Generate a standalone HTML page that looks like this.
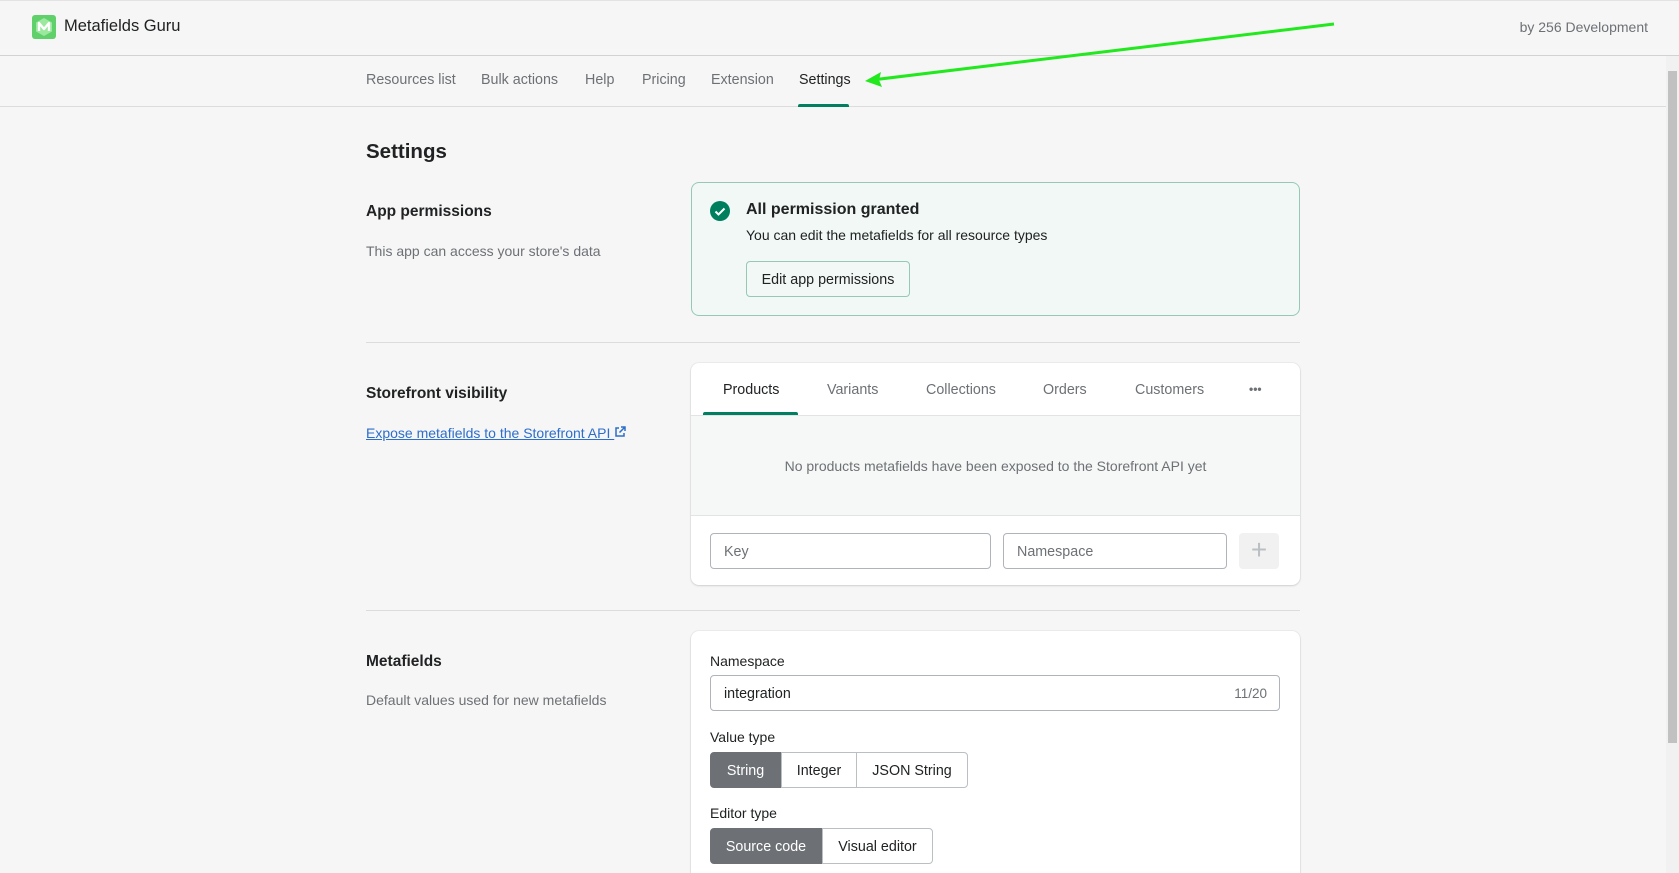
<!DOCTYPE html>
<html style="width:1679px;height:873px;overflow:hidden"><head><meta charset="utf-8"><style>
*{box-sizing:border-box;margin:0;padding:0}
body{width:1679px;height:873px;overflow:hidden;background:#f6f6f6;font-family:"Liberation Sans",sans-serif;color:#202223;position:relative;font-size:14px}
.a{position:absolute;white-space:nowrap}
.hdr{position:absolute;left:0;top:0;width:1679px;height:56px;border-top:1px solid #e3e3e3;border-bottom:1px solid #d2d2d2;background:#f6f6f6}
.nav{position:absolute;left:0;top:56px;width:1666px;height:51px;border-bottom:1px solid #dcdcdc}
.nv{color:#6d7175;top:72px;font-size:14.3px}
.card{position:absolute;background:#fff;border-radius:8px;box-shadow:0 0 0 1px rgba(0,0,0,.04),0 1px 2px rgba(0,0,0,.12)}
.inp{position:absolute;border:1px solid #aeb4b9;border-radius:4px;background:#fff;height:36px;padding:0 13px;line-height:36px;font-size:14.3px}
.btn{position:absolute;border:1px solid #babfc3;background:#fff;height:36px;line-height:36px;text-align:center;font-size:14.3px;color:#202223}
.dark{background:#6d7175;color:#fff;border-color:#6d7175}
.tab{top:382px;color:#6d7175;font-size:14.3px}
</style></head><body>
<div class="hdr"></div>
<svg class="a" style="left:32px;top:15px" width="24" height="24" viewBox="0 0 24 24"><rect width="24" height="24" rx="3" fill="#5fd06a"/><path d="M12 3l8 4.5v9L12 21l-8-4.5v-9z" fill="#9be89f"/><path d="M7 16V8l5 6 5-6v8" stroke="#fff" stroke-width="2.4" fill="none" stroke-linejoin="round"/></svg>
<div class="a" style="left:64px;top:17px;font-size:16.5px">Metafields Guru</div>
<div class="a" style="right:31px;top:19px;color:#6d7175;font-size:14px">by 256 Development</div>
<div class="nav"></div>
<div class="a nv" style="left:366px">Resources list</div>
<div class="a nv" style="left:481px">Bulk actions</div>
<div class="a nv" style="left:585px">Help</div>
<div class="a nv" style="left:642px">Pricing</div>
<div class="a nv" style="left:711px">Extension</div>
<div class="a nv" style="left:799px;color:#202223">Settings</div>
<div class="a" style="left:798px;top:104px;width:51px;height:3px;background:#008060;border-radius:2px 2px 0 0"></div>
<svg class="a" style="left:0;top:0" width="1679" height="873"><line x1="1334" y1="24" x2="872" y2="80" stroke="#22e81e" stroke-width="3"/><path d="M865 81l16-9-2 8 3 7z" fill="#22e81e"/></svg>
<div class="a" style="left:1666px;top:56px;width:13px;height:817px;background:#f1f1f1"></div>
<div class="a" style="left:1668px;top:71px;width:9px;height:672px;background:#c1c1c1"></div>
<div class="a" style="left:366px;top:140px;font-size:20.5px;font-weight:bold">Settings</div>
<div class="a" style="left:366px;top:203px;font-size:15.5px;font-weight:bold">App permissions</div>
<div class="a" style="left:366px;top:243px;color:#6d7175;font-size:14px">This app can access your store's data</div>
<div class="a" style="left:691px;top:182px;width:609px;height:134px;background:#f1f8f5;border:1px solid #95c9b4;border-radius:8px"></div>
<svg class="a" style="left:710px;top:201px" width="20" height="20"><circle cx="10" cy="10" r="10" fill="#007f5f"/><path d="M5.5 10.5l3 3 6-6" stroke="#fff" stroke-width="2" fill="none"/></svg>
<div class="a" style="left:746px;top:201px;font-size:16px;font-weight:bold">All permission granted</div>
<div class="a" style="left:746px;top:227px;font-size:14px">You can edit the metafields for all resource types</div>
<div class="btn" style="left:746px;top:261px;width:164px;border-color:#95c9b4;border-radius:4px;background:#f1f8f5">Edit app permissions</div>
<div class="a" style="left:366px;top:342px;width:934px;height:1px;background:#dcdcdc"></div>
<div class="a" style="left:366px;top:385px;font-size:15.5px;font-weight:bold">Storefront visibility</div>
<div class="a" style="left:366px;top:425px;color:#2c6ecb;text-decoration:underline;font-size:14px">Expose metafields to the Storefront API <svg width="12" height="12" viewBox="0 0 12 12"><path d="M5 2H2v8h8V7M7 1h4v4M11 1L5.5 6.5" stroke="#2c6ecb" stroke-width="1.5" fill="none"/></svg></div>
<div class="card" style="left:691px;top:363px;width:609px;height:222px;overflow:hidden">
<div style="position:absolute;left:0;top:52px;width:609px;height:101px;background:#f6f8f7;border-top:1px solid #e1e3e5;border-bottom:1px solid #e1e3e5"></div>
</div>
<div class="a tab" style="left:723px;color:#202223">Products</div>
<div class="a tab" style="left:827px">Variants</div>
<div class="a tab" style="left:926px">Collections</div>
<div class="a tab" style="left:1043px">Orders</div>
<div class="a tab" style="left:1135px">Customers</div>
<div class="a tab" style="left:1249px;top:382px;font-size:12px;font-weight:bold">•••</div>
<div class="a" style="left:703px;top:412px;width:95px;height:3px;background:#008060;border-radius:2px 2px 0 0"></div>
<div class="a" style="left:691px;width:609px;top:458px;text-align:center;color:#6d7175;font-size:14px">No products metafields have been exposed to the Storefront API yet</div>
<div class="inp" style="left:710px;top:533px;width:281px;color:#6d7175">Key</div>
<div class="inp" style="left:1003px;top:533px;width:224px;color:#6d7175">Namespace</div>
<div class="a" style="left:1239px;top:533px;width:40px;height:36px;background:#f1f1f1;border-radius:4px;color:#babfc3;font-size:28px;text-align:center;line-height:34px">+</div>
<div class="a" style="left:366px;top:610px;width:934px;height:1px;background:#dcdcdc"></div>
<div class="a" style="left:366px;top:653px;font-size:15.5px;font-weight:bold">Metafields</div>
<div class="a" style="left:366px;top:692px;color:#6d7175;font-size:14px">Default values used for new metafields</div>
<div class="card" style="left:691px;top:631px;width:609px;height:242px;border-radius:8px 8px 0 0"></div>
<div class="a" style="left:710px;top:653px;font-size:14px">Namespace</div>
<div class="inp" style="left:710px;top:675px;width:570px">integration<span style="position:absolute;right:12px;color:#6d7175;font-size:13.5px">11/20</span></div>
<div class="a" style="left:710px;top:729px;font-size:14px">Value type</div>
<div class="btn dark" style="left:710px;top:752px;width:71px;border-radius:4px 0 0 4px">String</div>
<div class="btn" style="left:781px;top:752px;width:76px">Integer</div>
<div class="btn" style="left:856px;top:752px;width:112px;border-radius:0 4px 4px 0">JSON String</div>
<div class="a" style="left:710px;top:805px;font-size:14px">Editor type</div>
<div class="btn dark" style="left:710px;top:828px;width:112px;border-radius:4px 0 0 4px">Source code</div>
<div class="btn" style="left:822px;top:828px;width:111px;border-radius:0 4px 4px 0">Visual editor</div>
</body></html>
